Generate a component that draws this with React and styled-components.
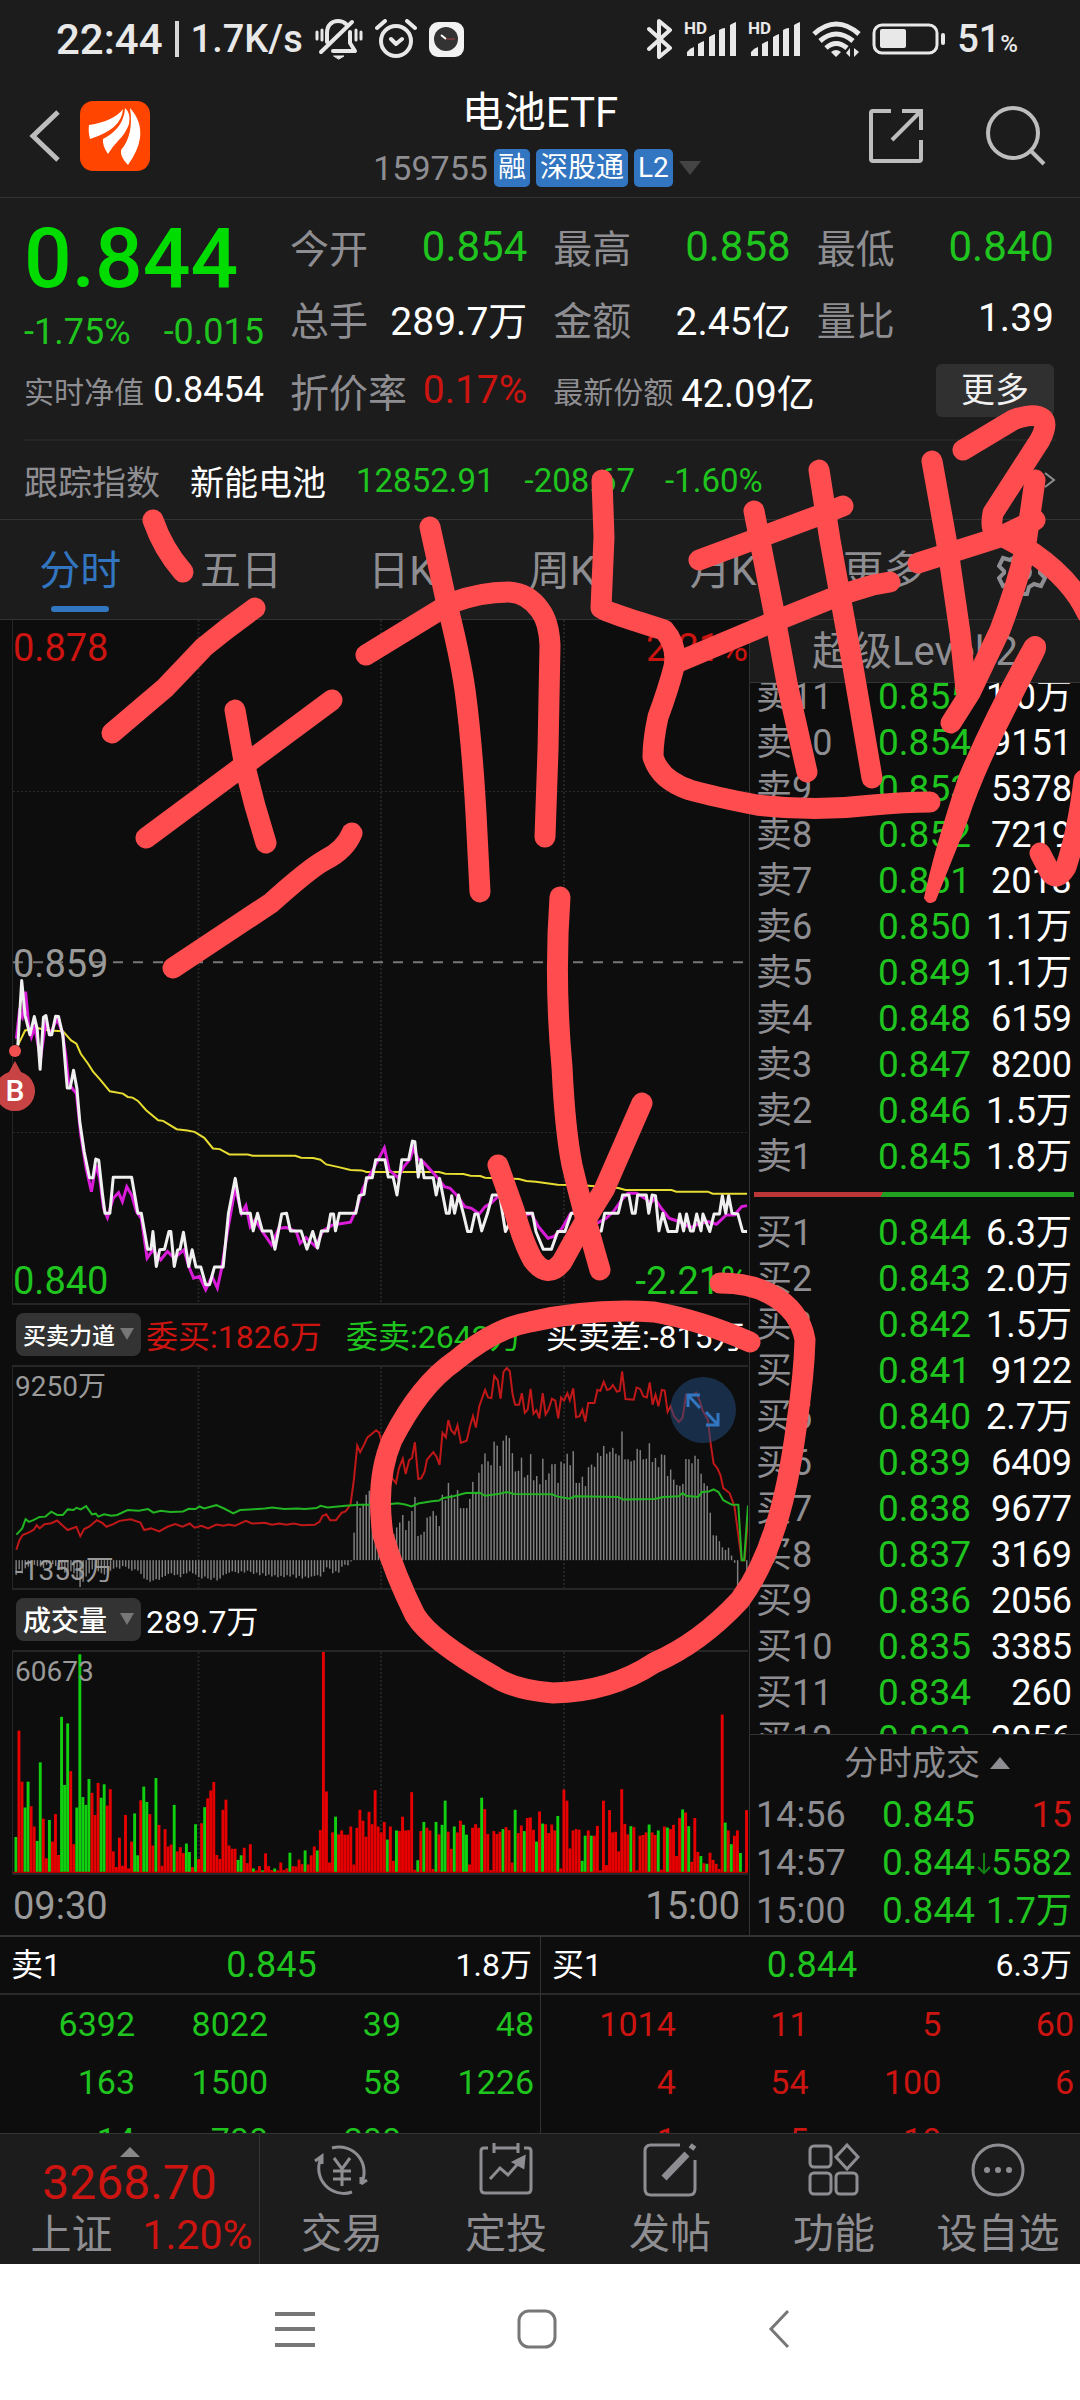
import React from "react";
import styled, { createGlobalStyle } from "styled-components";

const C = {
  bar: "#1c1c1c",
  base: "#0d0d0d",
  line: "#333333",
  grid: "#262626",
  up: "#cc1410",
  down: "#1fc41f",
  text: "#ffffff",
  mute: "#8e8e92",
  blue: "#3275c0",
  ink: "#ff4d4f",
};

const Global = createGlobalStyle`
  * { box-sizing: border-box; }
  html { background: #ffffff; }
  body {
    margin: 0;
    background: #ffffff;
    color: ${C.text};
    font-family: Roboto, "Noto Sans CJK SC", sans-serif;
  }
  button { font: inherit; color: inherit; background: none; border: 0; padding: 0; cursor: pointer; }
  a { color: inherit; text-decoration: none; }
  table { border-collapse: collapse; }
  h1, h2 { margin: 0; font-weight: 400; }
`;

const Page = styled.div`
  position: relative;
  overflow: hidden;
  background: ${C.base};
  white-space: nowrap;
`;

const Tone = styled.span`
  color: ${(p) => C[p.$c] || C.text};
  font-size: ${(p) => p.$size || 36}px;
`;

/* ---------- status bar ---------- */
const StatusBar = styled.div`
  display: flex;
  align-items: center;
  justify-content: space-between;
  height: 78px;
  padding: 0 62px 0 56px;
  background: ${C.bar};
  color: #e8e8e8;
  font-weight: 500;
`;
const StatusGroup = styled.div`
  display: flex;
  align-items: center;
  gap: ${(p) => p.$gap}px;
`;
const Clock = styled.span`font-size: 42px;`;
const Speed = styled.span`font-size: 38px;`;
const Divider = styled.i`
  width: 4px;
  height: 36px;
  background: #d8d8d8;
`;
const Percent = styled.small`font-size: 24px;`;

/* ---------- title bar ---------- */
const TitleBar = styled.header`
  display: grid;
  grid-template-columns: 1fr auto 1fr;
  align-items: center;
  height: 120px;
  padding: 0 34px 4px 28px;
  background: ${C.bar};
  border-bottom: 1px solid ${C.line};
`;
const TitleSide = styled.div`
  display: flex;
  align-items: center;
  justify-content: ${(p) => (p.$end ? "flex-end" : "flex-start")};
  gap: ${(p) => (p.$end ? 62 : 20)}px;
`;
const IconButton = styled.button`
  display: flex;
  align-items: center;
  justify-content: center;
`;
const TitleCenter = styled.div`
  display: flex;
  flex-direction: column;
  align-items: center;
  gap: 8px;
`;
const Title = styled.h1`
  padding-left: 6px;
  font-size: 42px;
  line-height: 56px;
`;
const CodeLine = styled.div`
  display: flex;
  align-items: center;
  gap: 6px;
  line-height: 38px;
  font-size: 34px;
  color: ${C.mute};
`;
const Tag = styled.span`
  padding: 0 4px;
  border-radius: 5px;
  background: ${C.blue};
  color: #ffffff;
  font-size: 28px;
  line-height: 38px;
`;
const Caret = styled.i`
  width: 0;
  height: 0;
  border: ${(p) => p.$w}px solid transparent;
  border-${(p) => (p.$up ? "bottom" : "top")}: ${(p) => p.$h}px solid ${(p) => p.$color};
  border-${(p) => (p.$up ? "top" : "bottom")}-width: 0;
`;

/* ---------- quote summary ---------- */
const Quote = styled.section`
  display: grid;
  grid-template-columns: 240px 1fr 1fr 1fr;
  grid-auto-rows: 72px;
  column-gap: 26px;
  padding: 12px 26px 13px 24px;
  background: ${C.bar};
`;
const LastBlock = styled.div`
  grid-row: span 2;
`;
const LastPrice = styled.div`
  color: #00dc00;
  font-size: 84px;
  font-weight: 500;
  line-height: 98px;
`;
const Changes = styled.div`
  display: flex;
  justify-content: space-between;
  color: ${C.down};
  font-size: 36px;
  line-height: 48px;
`;
const Stat = styled.div`
  display: flex;
  align-items: center;
  justify-content: ${(p) => (p.$tight ? "flex-start" : "space-between")};
  gap: 8px;
  grid-column: span ${(p) => p.$span || 1};
`;
const StatName = styled.span`
  color: ${C.mute};
  font-size: ${(p) => (p.$small ? 30 : 39)}px;
`;
const MoreButton = styled.button`
  width: 118px;
  margin-left: auto;
  border-radius: 6px;
  background: #303030;
  color: #f0f0f0;
  font-size: 34px;
  line-height: 53px;
`;
const IndexRow = styled.a`
  display: flex;
  align-items: center;
  gap: 30px;
  height: 80px;
  margin: 0 24px;
  border-top: 2px solid #242424;
`;
const IndexWrap = styled.div`
  background: ${C.bar};
  border-bottom: 1px solid ${C.line};
`;
const Push = styled.span`
  display: flex;
  margin-left: auto;
`;

/* ---------- period tabs ---------- */
const Tabs = styled.nav`
  display: flex;
  height: 100px;
  background: ${C.bar};
  border-bottom: 1px solid ${C.line};
`;
const Tab = styled.button`
  display: flex;
  flex: 1;
  flex-direction: column;
  align-items: center;
  padding-top: 22px;
  color: ${(p) => (p.$on ? C.blue : C.mute)};
  font-size: 41px;
  line-height: 58px;
  &::after {
    content: "";
    width: 58px;
    height: 6px;
    margin-top: 6px;
    border-radius: 3px;
    background: ${(p) => (p.$on ? C.blue : "transparent")};
  }
`;
const GearButton = styled(IconButton)`
  flex: 0 0 116px;
  padding-top: 4px;
`;

/* ---------- charts ---------- */
const Main = styled.main`
  display: flex;
  border-bottom: 2px solid ${C.line};
`;
const ChartColumn = styled.section`
  flex: 1;
  min-width: 0;
  padding: 0 1px 0 12px;
`;
const ChartBox = styled.div`
  position: relative;
  height: ${(p) => p.$h}px;
  border: solid ${C.grid};
  border-width: 0 0 2px 1px;
  border-top: ${(p) => (p.$top ? `2px solid ${C.grid}` : "0")};
`;
const Plot = styled.svg`
  display: block;
  width: 100%;
  height: 100%;
  path, line { vector-effect: non-scaling-stroke; fill: none; }
`;
const AxisLabel = styled.span`
  position: absolute;
  left: ${(p) => (p.$right ? "auto" : "0")};
  right: ${(p) => (p.$right ? "0" : "auto")};
  top: ${(p) => p.$y}px;
  padding: 0 ${(p) => (p.$small ? 2 : 0)}px;
  color: ${(p) => C[p.$c] || "#999999"};
  font-size: ${(p) => (p.$small ? 28 : 38)}px;
  line-height: 40px;
`;
const BuyMark = styled.svg`
  position: absolute;
  left: -18px;
  top: 424px;
  overflow: visible;
`;
const Expand = styled.button`
  position: absolute;
  right: 12px;
  top: 10px;
  width: 66px;
  height: 66px;
  border-radius: 50%;
  background: rgba(34, 74, 122, 0.55);
  display: flex;
  align-items: center;
  justify-content: center;
`;
const Legend = styled.div`
  display: flex;
  align-items: center;
  height: 60px;
  padding: 0 0 2px 4px;
  font-size: 32px;
`;
const Pill = styled.button`
  display: flex;
  align-items: center;
  justify-content: space-between;
  width: 125px;
  height: 43px;
  margin-right: 5px;
  padding: 0 7px;
  border-radius: 8px;
  background: #333333;
  font-size: ${(p) => (p.$long ? 23 : 28)}px;
  font-weight: 500;
`;
const LegendItem = styled.span`
  width: 200px;
  color: ${(p) => C[p.$c]};
`;
const TimeAxis = styled.div`
  display: flex;
  justify-content: space-between;
  padding: 2px 8px 0 1px;
  color: #999999;
  font-size: 38px;
  line-height: 58px;
`;

/* ---------- order book ---------- */
const Book = styled.aside`
  flex: 0 0 331px;
  display: flex;
  flex-direction: column;
  border-left: 1px solid ${C.line};
`;
const BookHead = styled.h2`
  padding-top: 2px;
  background: ${C.bar};
  border-bottom: 1px solid ${C.line};
  color: ${C.mute};
  font-size: 40px;
  line-height: 60px;
  text-align: center;
`;
const Levels = styled.div`
  height: 1052px;
  padding: 0 8px 0 6px;
  overflow: hidden;
  border-bottom: 1px solid ${C.line};
`;
const LevelTable = styled.table`
  width: 100%;
  table-layout: fixed;
  margin-top: ${(p) => (p.$scrolled ? "-9px" : "0")};
  font-size: 36px;
  line-height: ${(p) => p.$row || 46}px;
  td, th { padding: 0; height: ${(p) => p.$row || 46}px; font-weight: 400; text-align: right; }
  th { width: 90px; text-align: left; color: ${C.mute}; }
  td:nth-child(2) { width: ${(p) => (p.$row ? 129 : 125)}px; color: ${C.down}; font-size: 37px; }
`;
const Ratio = styled.div`
  height: 5px;
  margin: 12px -2px 13px;
  background: linear-gradient(120deg, #bb3636 40%, #22a022 40%);
`;
const TradeHead = styled.button`
  display: flex;
  align-items: center;
  justify-content: center;
  gap: 10px;
  padding-left: 24px;
  color: ${C.mute};
  font-size: 34px;
  line-height: 56px;
`;
const Trades = styled.div`padding: 0 8px 0 6px;`;

/* ---------- queues ---------- */
const Queues = styled.section`
  display: grid;
  grid-template-columns: 1fr 1fr;
`;
const Queue = styled.div`
  border-left: ${(p) => (p.$second ? `1px solid ${C.line}` : "0")};
`;
const QueueHead = styled.div`
  display: grid;
  grid-template-columns: 1fr auto 1fr;
  align-items: center;
  padding: 0 8px 0 11px;
  border-bottom: 2px solid #2a2a2a;
  font-size: 32px;
  line-height: 56px;
  > :last-child { text-align: right; }
`;
const QueueBody = styled.div`
  height: 138px;
  padding-left: 8px;
  overflow: hidden;
`;
const QueueTable = styled.table`
  width: 100%;
  table-layout: fixed;
  color: ${(p) => C[p.$c]};
  font-size: 34px;
  line-height: 58px;
  td { padding: 0 6px 0 0; height: 58px; text-align: right; }
`;

/* ---------- bottom bars ---------- */
const Dock = styled.nav`
  display: flex;
  background: ${C.bar};
  border-top: 1px solid ${C.line};
`;
const IndexCell = styled.a`
  display: flex;
  flex: 0 0 260px;
  flex-direction: column;
  align-items: center;
  padding-top: 13px;
  border-right: 1px solid ${C.line};
  line-height: 52px;
`;
const IndexLine = styled.span`
  display: flex;
  gap: 30px;
  padding-left: 24px;
`;
const DockItem = styled.button`
  display: flex;
  flex: 1;
  flex-direction: column;
  align-items: center;
  gap: 6px;
  padding-top: 8px;
  color: ${C.mute};
  font-size: 41px;
  line-height: 60px;
`;
const SystemBar = styled.nav`
  display: flex;
  justify-content: center;
  height: 136px;
  padding: 0 6px 6px 0;
  background: #ffffff;
`;
const SystemKey = styled(IconButton)`
  width: 242px;
`;
const Scribble = styled.svg`
  position: absolute;
  left: 0;
  top: 0;
  width: 100%;
  pointer-events: none;
  fill: none;
  stroke: ${C.ink};
  stroke-width: 21;
  stroke-linecap: round;
  stroke-linejoin: round;
`;

/* ---------- data ---------- */
const PRICE =
  "35,290 43,95 50,200 60,258 69,203 75,240 81,362 88,205 93,200 100,258 105,258 113,202 119,203 128,260 137,418 143,418 150,365 157,420 163,520 172,610 183,688 190,688 196,632 202,635 210,740 215,795 225,795 232,687 270,687 283,795 290,795 303,903 310,903 314,850 321,955 328,905 338,903 347,850 351,850 358,955 365,905 370,903 377,852 388,955 395,905 403,957 413,957 423,1010 431,1010 441,957 459,957 470,795 484,690 496,795 515,795 521,848 530,795 540,848 558,848 566,903 580,797 590,795 598,848 620,848 632,903 644,850 654,900 662,848 675,848 681,797 687,797 691,848 699,795 733,795 740,742 750,738 755,688 767,688 774,634 793,634 800,686 810,686 818,740 828,634 842,634 850,578 855,580 862,686 868,634 874,688 893,688 899,740 906,690 920,795 926,795 931,742 937,795 945,740 955,795 964,850 971,850 979,797 985,797 993,848 1005,795 1015,740 1030,740 1042,850 1060,795 1098,795 1105,850 1120,903 1137,903 1150,850 1165,850 1178,795 1200,795 1215,850 1240,848 1247,795 1275,795 1284,740 1297,740 1304,795 1310,795 1315,740 1333,740 1338,795 1345,740 1352,742 1359,848 1367,795 1378,850 1396,850 1402,797 1410,848 1416,797 1424,848 1430,848 1437,797 1446,848 1450,797 1464,850 1473,797 1484,797 1490,742 1497,795 1503,742 1510,795 1522,797 1532,850 1541,850";
const LEAD =
  "32,270 38,190 44,205 51,128 58,240 63,265 70,235 82,330 92,225 102,255 116,210 127,250 134,320 140,405 156,435 165,560 176,660 187,730 196,650 204,690 212,780 220,808 232,750 243,733 251,760 260,715 270,740 280,790 290,810 302,930 314,905 330,935 344,910 358,930 378,905 388,955 398,990 410,985 423,1025 436,985 447,1020 456,960 468,850 484,720 497,795 506,772 515,835 525,815 540,850 559,890 574,840 590,838 610,850 618,885 630,868 650,895 665,848 685,830 722,822 735,780 748,720 758,690 770,660 792,598 802,665 820,688 832,655 845,632 852,600 862,632 872,640 900,685 916,715 928,720 944,745 958,775 972,780 988,797 1000,775 1012,765 1030,740 1048,800 1070,812 1095,795 1110,835 1130,870 1142,865 1158,842 1176,797 1200,780 1225,830 1250,810 1265,790 1282,755 1295,735 1313,735 1332,752 1342,765 1350,750 1364,780 1380,810 1404,822 1424,838 1440,828 1460,820 1478,828 1498,800 1515,800 1530,775 1541,772";
const AVG =
  "35,290 50,245 75,238 100,245 128,247 145,275 156,285 165,315 180,345 190,368 205,393 225,428 252,435 262,445 272,447 283,457 300,485 325,515 335,517 363,542 385,546 400,550 420,568 438,600 452,602 472,618 510,618 520,622 608,622 620,628 645,629 660,634 672,648 700,657 722,665 745,666 755,671 905,671 918,676 955,677 970,682 990,683 1000,688 1070,692 1085,698 1105,700 1120,703 1150,709 1200,711 1275,719 1290,725 1385,725 1395,730 1460,730 1470,736 1541,736";
const BUY_FORCE =
  "32,753 38,725 45,708 58,700 68,692 74,678 80,688 90,675 104,672 116,664 128,680 138,693 156,683 164,712 172,690 183,682 198,663 210,672 218,683 232,675 245,665 268,660 288,670 296,693 310,688 327,697 344,683 360,675 375,683 390,673 400,686 414,680 428,688 445,676 460,680 470,676 483,680 506,665 518,673 545,671 560,677 575,673 590,677 605,673 622,678 648,677 658,668 664,650 672,645 680,663 692,663 704,640 712,636 722,615 729,540 736,435 742,455 750,432 757,410 764,402 775,388 781,395 788,430 800,520 816,550 822,505 830,475 836,522 843,480 849,473 855,425 862,537 868,535 875,515 880,478 893,455 900,470 906,494 912,396 919,410 924,357 930,388 937,400 943,373 950,427 962,420 969,375 975,345 981,380 988,315 1000,265 1006,288 1013,290 1019,222 1026,235 1032,292 1038,210 1045,198 1051,208 1057,280 1062,310 1070,310 1076,275 1082,335 1088,325 1094,262 1100,338 1106,327 1112,352 1119,275 1125,340 1131,325 1138,292 1145,298 1151,352 1157,288 1163,298 1170,275 1175,297 1182,260 1188,348 1195,345 1201,325 1207,362 1213,305 1226,305 1232,265 1238,268 1245,240 1252,265 1258,262 1264,250 1272,270 1278,268 1283,208 1290,293 1307,295 1313,258 1320,262 1327,285 1334,288 1340,242 1346,310 1352,280 1358,315 1365,265 1371,267 1377,332 1383,315 1390,345 1400,363 1408,350 1415,280 1428,282 1436,274 1443,298 1450,330 1460,355 1466,430 1472,490 1480,505 1486,525 1492,565 1505,580 1515,620 1524,720 1530,785 1536,785 1543,655";
const SELL_FORCE =
  "32,707 44,688 51,660 58,668 68,662 80,653 92,652 104,637 116,647 128,647 138,630 150,632 156,625 165,630 176,620 188,645 196,643 201,652 213,645 228,649 240,647 262,632 285,634 304,629 315,640 330,634 350,638 376,636 388,628 402,629 410,621 420,627 445,617 462,628 480,642 494,632 515,630 545,627 560,624 585,629 612,627 628,629 652,626 660,619 675,624 712,619 740,616 790,616 820,611 835,615 848,621 862,612 890,605 905,603 912,596 935,590 960,580 988,579 1000,588 1030,582 1045,577 1060,583 1138,584 1150,591 1175,597 1185,590 1275,592 1285,600 1350,598 1368,592 1400,590 1408,580 1415,588 1440,592 1448,577 1462,575 1472,569 1482,577 1492,602 1510,616 1523,616 1530,785 1535,785 1543,618";
const FORCE_BARS = [
  -45, -28, -40, -25, -20, -22, -14, -18, -20, -24, -14, -10, -12, -18, -24, -30, -38, -46, -34, -40, -60, -82, -66, -50, -40, -28, -22, -34, -40, -44, -38, -32, -26, -22, -26, -18, -20, -26, -32, -28, -32, -42, -56, -60, -66, -62, -58, -60, -52, -48, -42, -40, -46, -44, -52, -42, -40, -34, -40, -44, -52, -56, -50, -56, -60, -54, -62, -56, -46, -42, -38, -34, -36, -40, -34, -38, -32, -36, -42, -38, -46, -40, -48, -44, -50, -46, -52, -48, -52, -46, -50, -44, -54, -48, -56, -50, -54, -50, -48, -46, -50, -36, -22, -26, -40, -34, -38, -20, -14, -16, -4,
  84, 180, 160, 172, 200, 212, 220, 210, 190, 170, 150, 120, 100, 80, 100, 115, 138, 92, 120, 150, 193, 74, 78, 87, 130, 134, 150, 136, 104, 200, 183, 236, 200, 188, 214, 159, 159, 159, 187, 239, 207, 267, 293, 326, 302, 290, 362, 350, 288, 365, 381, 373, 327, 271, 273, 313, 253, 260, 324, 244, 257, 232, 310, 245, 265, 293, 294, 236, 301, 295, 325, 290, 333, 236, 236, 255, 226, 284, 292, 285, 328, 318, 349, 325, 331, 343, 325, 320, 393, 308, 308, 302, 305, 340, 336, 308, 310, 357, 300, 312, 284, 323, 321, 257, 277, 246, 230, 227, 233, 309, 308, 296, 319, 309, 264, 235, 227, 145, 76, 75, 58, 39, 31, 38, 14, -8, -82, 0, 0, -80,
];
const VOLUME =
  "g110 r435 r279 g200 g279 r204 r142 g98 g338 r166 r45 g162 r96 r180 r55 g477 g269 g457 r311 r88 g200 g668 g232 g208 g287 r245 r177 r275 g230 g271 r206 r256 r66 r18 r108 r22 r177 r14 r96 g182 g54 r222 g264 g217 r180 r84 g290 r147 r22 r134 r81 r87 g208 r66 r79 r61 g90 g64 r18 g149 r43 r152 g201 r228 r252 r278 r55 r43 r193 r224 r84 r74 r74 g40 g54 r77 r30 r88 g14 r8 r21 g8 r60 r21 r9 g14 r8 r32 r9 r14 g62 r21 r20 r41 r27 g69 r26 r54 r81 g69 r131 r675 r249 r32 r124 g172 r118 r130 r117 r117 r142 r26 r138 r193 r160 r111 r187 r149 r253 r142 r124 r156 g102 r142 r37 g130 r128 r172 r130 r131 r247 r10 g39 r128 g156 r138 r130 r12 g156 r118 g147 g221 r126 r74 g142 r124 r160 g147 g117 r26 r138 r149 r138 g230 r195 r119 r9 r128 r119 r126 g134 r140 r131 r32 g193 r122 r145 g128 r168 r170 r132 g96 r188 g151 r149 r122 r148 r130 g174 r14 r255 r221 r75 r130 r134 r132 g37 g114 r130 g114 r114 r144 r8 r221 r24 r192 r124 r126 r66 r256 r150 r118 g143 r140 r8 r114 r116 r124 g148 r124 r116 g130 r10 r142 g139 r134 r147 r52 r168 g194 r185 g143 r34 r168 r64 g52 r30 g28 r62 r40 r28 r12 r484 g154 r130 g88 r114 r130 g61 r0 r192".split(
    " "
  );
const STEP = 1509 / 240;

const ASKS = [
  ["卖11", "0.855", "1.0万"], ["卖10", "0.854", "9151"], ["卖9", "0.853", "5378"],
  ["卖8", "0.852", "7219"], ["卖7", "0.851", "2013"], ["卖6", "0.850", "1.1万"],
  ["卖5", "0.849", "1.1万"], ["卖4", "0.848", "6159"], ["卖3", "0.847", "8200"],
  ["卖2", "0.846", "1.5万"], ["卖1", "0.845", "1.8万"],
];
const BIDS = [
  ["买1", "0.844", "6.3万"], ["买2", "0.843", "2.0万"], ["买3", "0.842", "1.5万"],
  ["买4", "0.841", "9122"], ["买5", "0.840", "2.7万"], ["买6", "0.839", "6409"],
  ["买7", "0.838", "9677"], ["买8", "0.837", "3169"], ["买9", "0.836", "2056"],
  ["买10", "0.835", "3385"], ["买11", "0.834", "260"], ["买12", "0.833", "2056"],
];
const ASK_QUEUE = [["6392", "8022", "39", "48"], ["163", "1500", "58", "1226"], ["14", "700", "200", ""]];
const BID_QUEUE = [["1014", "11", "5", "60"], ["4", "54", "100", "6"], ["1", "5", "10", ""]];

/* ---------- icons ---------- */
const s = (w, extra) => ({ fill: "none", stroke: "currentColor", strokeWidth: w, ...extra });
const round = { strokeLinecap: "round", strokeLinejoin: "round" };

const MuteIcon = () => (
  <svg width="48" height="42" viewBox="0 0 48 42" {...s(4, round)}>
    <path d="M12 24V15C12 7 17 3 23 3c3 0 6 1 8 3M35 14v11l5 8H18M6 34 37 4" />
    <path d="M2 14v7M7 12v10M41 12v10M46 14v7" strokeWidth="3" />
    <path d="M19 38h10l-5 3z" fill="currentColor" strokeWidth="1" />
  </svg>
);
const AlarmIcon = () => (
  <svg width="42" height="40" viewBox="0 0 42 40" {...s(4, round)}>
    <circle cx="21" cy="22" r="15" />
    <path d="M2 9l8-7M40 9l-8-7M16 20l5 5 6-5" />
  </svg>
);
const DialIcon = () => (
  <svg width="35" height="35" viewBox="0 0 35 35">
    <rect width="35" height="35" rx="9" fill="#f2f2f2" />
    <circle cx="17" cy="17" r="12" fill="#333333" />
    <path d="M12 13l5 4" stroke="#fff" strokeWidth="2" />
    <path d="M17 17h9" stroke="#a04040" strokeWidth="1" />
  </svg>
);
const BluetoothIcon = () => (
  <svg width="26" height="42" viewBox="0 0 26 42" {...s(4, round)}>
    <path d="M2 11l21 19-11 9V3l11 9L2 31" />
  </svg>
);
const HdText = styled.text`
  font-size: 17px;
  font-weight: 700;
  fill: currentColor;
`;
const SignalIcon = () => (
  <svg width="53" height="36" viewBox="0 0 53 36" fill="currentColor">
    <HdText x="0" y="13">HD</HdText>
    <path d="M3 35v-4q3-4 7-5v9zM14 35V23q3-2 6-3v15zM25 35V16q3-2 6-3v22zM35 35V9q3-2 6-2v28zM46 35V4q3-2 6-3v34z" />
  </svg>
);
const WifiIcon = () => (
  <svg width="49" height="37" viewBox="0 0 49 37">
    <g {...s(5)}>
      <path d="M2 13Q24-7 47 13M8 20Q24 6 41 20M14 27q10-9 21 0" />
    </g>
    <path d="M19 31q5-4 10 0l-5 5zM38 27v9l-4-4zM42 36v-9l5 4" fill="currentColor" />
  </svg>
);
const BatteryIcon = () => (
  <svg width="74" height="32" viewBox="0 0 74 32">
    <rect x="2" y="2" width="63" height="28" rx="8" {...s(3)} />
    <rect x="8" y="6" width="26" height="19" rx="2" fill="currentColor" />
    <rect x="69" y="10" width="4" height="12" rx="2" fill="currentColor" />
  </svg>
);
const Logo = () => (
  <svg width="70" height="70" viewBox="0 0 70 70">
    <rect width="70" height="70" rx="13" fill="#ff4500" />
    <g fill="#fff">
      <path d="M9 24Q34 20 43 8Q42 28 10 38Q8 30 9 24z" />
      <path d="M23 38Q44 27 45 7Q51 12 49 23Q46 32 38 40Q33 45 28 53Q22 44 23 38z" />
      <path d="M50 7Q62 20 60 37Q58 50 48 64Q40 56 41 49Q54 34 50 7z" />
    </g>
  </svg>
);
const ShareIcon = () => (
  <svg width="56" height="56" viewBox="0 0 56 56" {...s(4)} color="#bdbdbd">
    <path d="M23 3H5q-2 0-2 2v46q0 2 2 2h46q2 0 2-2V32M34 3h19v19M24 32 52 4" />
  </svg>
);
const SearchIcon = () => (
  <svg width="60" height="61" viewBox="0 0 60 61" {...s(4)} color="#bdbdbd">
    <circle cx="27" cy="28" r="25" />
    <path d="M45 46l13 13" />
  </svg>
);
const GearIcon = () => (
  <svg width="50" height="50" viewBox="0 0 50 50" {...s(4)} color={C.mute}>
    <path d="M20 3h10l2 7 5 3 7-2 4 8-5 5v2l5 5-4 8-7-2-5 3-2 7H20l-2-7-5-3-7 2-4-8 5-5v-2l-5-5 4-8 7 2 5-3z" />
    <circle cx="25" cy="25" r="8" />
  </svg>
);
const DOCK = [
  ["交易", <g key="a"><path d="M18 6a25 25 0 0 1 29 36M38 50A25 25 0 0 1 7 16M1 19l7-5v8M47 42l6-4M47 42v-7" /><path d="M20 16l8 11 8-11M28 27v17M19 29h18M19 37h18" /></g>],
  ["定投", <g key="b"><path d="M10 6H6q-3 0-3 3v38q0 4 4 4h42q4 0 4-4V9q0-3-3-3h-4M16 6h24M16 1v10M40 1v10" /><path d="M12 37l10-11 8 7 14-16" /><path d="M36 20l10-5-1 10z" fill="currentColor" /></g>],
  ["发帖", <g key="c"><path d="M38 3H9Q3 3 3 9v38q0 6 6 6h38q6 0 6-6V18" /><path d="M45 12 22 36" strokeWidth="7" /><path d="M49 7l3-4" strokeWidth="6" /></g>],
  ["功能", <g key="d"><rect x="4" y="4" width="21" height="21" rx="4" /><rect x="4" y="31" width="21" height="21" rx="4" /><rect x="30" y="31" width="21" height="21" rx="4" /><path d="M41 3 52 15 41 27 30 15z" /></g>],
  ["设自选", <g key="e"><circle cx="28" cy="28" r="25" /><g fill="currentColor" stroke="none"><circle cx="17" cy="28" r="3" /><circle cx="28" cy="28" r="3" /><circle cx="39" cy="28" r="3" /></g></g>],
];

const toPath = (pts) => "M" + pts.split(" ").join("L");

function Grid({ top, bottom }) {
  return [408, 785, 1163].map((x) => (
    <line key={x} x1={x} x2={x} y1={top} y2={bottom} stroke="#242424" strokeWidth="2" strokeDasharray="2 2" />
  ));
}

function PriceChart() {
  return (
    <ChartBox $h={685}>
      <Plot viewBox="25 -990 1518 2055" preserveAspectRatio="none">
        <Grid top={-990} bottom={1065} />
        {[-474, 552].map((y) => (
          <line key={y} x1="25" x2="1543" y1={y} y2={y} stroke="#2a2a2a" strokeWidth="1" strokeDasharray="2 2" />
        ))}
        <line x1="25" x2="1543" y1="40" y2="40" stroke="#777777" strokeWidth="2" strokeDasharray="10 10" />
        <path d={toPath(AVG)} stroke="#e6dc32" strokeWidth="2" />
        <path d={toPath(LEAD)} stroke="#d81cd8" strokeWidth="3" />
        <path d={toPath(PRICE)} stroke="#f0f0f0" strokeWidth="3" strokeLinejoin="round" />
      </Plot>
      <AxisLabel $y={8} $c="up">0.878</AxisLabel>
      <AxisLabel $y={8} $c="up" $right>2.21%</AxisLabel>
      <AxisLabel $y={324}>0.859</AxisLabel>
      <AxisLabel $y={641} $c="down">0.840</AxisLabel>
      <AxisLabel $y={641} $c="down" $right>-2.21%</AxisLabel>
      <BuyMark width="40" height="68" viewBox="0 0 40 68">
        <circle cx="20" cy="7" r="6" fill="#f05050" />
        <path d="M20 17l6 11a20 20 0 1 1-12 0z" fill="#c84444" />
        <text x="20" y="57" textAnchor="middle" fontSize="30" fontWeight="500" fill="#fff">B</text>
      </BuyMark>
    </ChartBox>
  );
}

function ForceChart() {
  return (
    <ChartBox $h={225} $top>
      <Plot viewBox="25 195 1518 675" preserveAspectRatio="none">
        <Grid top={195} bottom={870} />
        {FORCE_BARS.map((v, i) => (
          <rect key={i} x={30 + i * STEP} y={v > 0 ? 785 - v : 785} width="3" height={Math.abs(v)} fill="#808080" />
        ))}
        <path d={toPath(BUY_FORCE)} stroke="#c01818" strokeWidth="2" />
        <path d={toPath(SELL_FORCE)} stroke="#22b422" strokeWidth="2" />
      </Plot>
      <AxisLabel $y={0} $small>9250万</AxisLabel>
      <AxisLabel $y={184} $small>-1353万</AxisLabel>
      <Expand aria-label="放大">
        <svg width="34" height="34" viewBox="0 0 34 34" {...s(3)} color={C.blue}>
          <path d="M2 14V2h12M2 2l12 13M32 20v12H20M32 32 20 19" />
        </svg>
      </Expand>
    </ChartBox>
  );
}

function VolumeChart() {
  return (
    <ChartBox $h={225} $top>
      <Plot viewBox="25 150 1518 675" preserveAspectRatio="none">
        <Grid top={150} bottom={825} />
        {VOLUME.map((v, i) => (
          <rect
            key={i}
            x={28 + i * STEP}
            y={825 - Number(v.slice(1))}
            width="6"
            height={Number(v.slice(1))}
            fill={v[0] === "g" ? "#10d010" : "#e60000"}
          />
        ))}
        <line x1="25" x2="1543" y1="824" y2="824" stroke="#b00000" strokeWidth="2" />
      </Plot>
      <AxisLabel $y={0} $small>60673</AxisLabel>
    </ChartBox>
  );
}

function LevelRows({ rows, scrolled }) {
  return (
    <LevelTable $scrolled={scrolled}>
      <tbody>
        {rows.map(([name, price, size]) => (
          <tr key={name}>
            <th scope="row">{name}</th>
            <td>{price}</td>
            <td>{size}</td>
          </tr>
        ))}
      </tbody>
    </LevelTable>
  );
}

function QueuePanel({ name, price, size, rows, color, second }) {
  return (
    <Queue $second={second}>
      <QueueHead>
        <span>{name}</span>
        <Tone $c="down">{price}</Tone>
        <span>{size}</span>
      </QueueHead>
      <QueueBody>
        <QueueTable $c={color}>
          <tbody>
            {rows.map((r, i) => (
              <tr key={i}>{r.map((v, j) => <td key={j}>{v}</td>)}</tr>
            ))}
          </tbody>
        </QueueTable>
      </QueueBody>
    </Queue>
  );
}

const STROKES = [
  "M153 520Q163 549 183 572",
  "M255 608Q228 627 204 647Q188 664 165 688L112 733",
  "M332 700Q240 768 146 838",
  "M235 710L245 767Q254 805 266 843",
  "M352 833Q345 850 325 860Q310 868 271 903L173 968",
  "M366 655L451 603Q480 592 509 592Q528 593 540 610Q549 622 550 645L548 750L545 837",
  "M430 527L446 600Q460 655 465 690Q473 750 477 833L480 892",
  "M602 480L604 537L601 608Q603 611 664 630Q678 646 674 667Q668 690 658 717Q653 740 653 757Q660 780 690 790Q715 797 757 805Q815 812 873 805Q905 802 930 802",
  "M699 560L753 540L820 515L843 506",
  "M678 662L773 622L840 595L873 585L890 582",
  "M754 511L773 607L787 683L807 772",
  "M819 470L830 540L853 667L872 778",
  "M932 461L948 550L960 633L966 690",
  "M1035 480L1025 550Q1017 585 1000 630L970 693L951 723",
  "M918 563L1000 537L1035 520",
  "M963 450L1013 420Q1034 412 1043 419Q1048 425 1040 440L993 513Q990 528 995 532L1033 553Q1072 580 1087 613",
  "M1084 780Q1078 830 1066 867Q1057 882 1050 872L1040 853",
  "M560 897Q554 980 562 1067Q565 1130 572 1165Q580 1200 600 1270",
  "M498 1165L514 1210Q524 1245 533 1260Q548 1280 562 1262Q585 1220 604 1190L642 1103",
  "M720 1283Q750 1283 770 1294Q800 1310 805 1340Q804 1375 797 1422Q788 1490 775 1528Q762 1570 740 1600Q700 1643 654 1663Q610 1692 553 1693Q515 1690 495 1677Q430 1640 415 1615Q395 1575 383 1535Q375 1480 392 1440Q420 1385 455 1361Q495 1328 530 1322Q590 1308 654 1312Q700 1320 750 1342",
];

export default function App() {
  return (
    <Page>
      <Global />
      <StatusBar>
        <StatusGroup $gap={12}>
          <Clock>22:44</Clock>
          <Divider />
          <Speed>1.7K/s</Speed>
          <MuteIcon />
          <AlarmIcon />
          <DialIcon />
        </StatusGroup>
        <StatusGroup $gap={11}>
          <BluetoothIcon />
          <SignalIcon />
          <SignalIcon />
          <WifiIcon />
          <BatteryIcon />
          <Speed>51<Percent>%</Percent></Speed>
        </StatusGroup>
      </StatusBar>

      <TitleBar>
        <TitleSide>
          <IconButton aria-label="返回">
            <svg width="32" height="54" viewBox="0 0 32 54" {...s(5)} color="#bdbdbd">
              <path d="M30 3 5 27l25 24" />
            </svg>
          </IconButton>
          <Logo />
        </TitleSide>
        <TitleCenter>
          <Title>电池ETF</Title>
          <CodeLine>
            159755 <Tag>融</Tag><Tag>深股通</Tag><Tag>L2</Tag>
            <Caret $w={11} $h={14} $color="#444444" />
          </CodeLine>
        </TitleCenter>
        <TitleSide $end>
          <IconButton aria-label="分享"><ShareIcon /></IconButton>
          <IconButton aria-label="搜索"><SearchIcon /></IconButton>
        </TitleSide>
      </TitleBar>

      <Quote>
        <LastBlock>
          <LastPrice>0.844</LastPrice>
          <Changes><span>-1.75%</span><span>-0.015</span></Changes>
        </LastBlock>
        <Stat><StatName>今开</StatName><Tone $c="down" $size={42}>0.854</Tone></Stat>
        <Stat><StatName>最高</StatName><Tone $c="down" $size={42}>0.858</Tone></Stat>
        <Stat><StatName>最低</StatName><Tone $c="down" $size={42}>0.840</Tone></Stat>
        <Stat><StatName>总手</StatName><Tone $size={39}>289.7万</Tone></Stat>
        <Stat><StatName>金额</StatName><Tone $size={39}>2.45亿</Tone></Stat>
        <Stat><StatName>量比</StatName><Tone $size={39}>1.39</Tone></Stat>
        <Stat><StatName $small>实时净值</StatName><Tone $size={36}>0.8454</Tone></Stat>
        <Stat><StatName>折价率</StatName><Tone $c="up" $size={39}>0.17%</Tone></Stat>
        <Stat $tight $span={2}>
          <StatName $small>最新份额</StatName>
          <Tone $size={38}>42.09亿</Tone>
          <MoreButton>更多</MoreButton>
        </Stat>
      </Quote>
      <IndexWrap>
        <IndexRow href="#index">
          <Tone $c="mute" $size={34}>跟踪指数</Tone>
          <Tone $size={34}>新能电池</Tone>
          <Tone $c="down" $size={33}>12852.91</Tone>
          <Tone $c="down" $size={33}>-208.67</Tone>
          <Tone $c="down" $size={33}>-1.60%</Tone>
          <Push>
            <svg width="12" height="16" viewBox="0 0 12 16" {...s(2)} color={C.mute}>
              <path d="M1 1l9 7-9 7" />
            </svg>
          </Push>
        </IndexRow>
      </IndexWrap>

      <Tabs>
        {["分时", "五日", "日K", "周K", "月K", "更多"].map((t, i) => (
          <Tab key={t} $on={i === 0}>{t}</Tab>
        ))}
        <GearButton aria-label="设置"><GearIcon /></GearButton>
      </Tabs>

      <Main>
        <ChartColumn>
          <PriceChart />
          <Legend>
            <Pill $long>买卖力道 <Caret $w={7} $h={12} $color="#777777" /></Pill>
            <LegendItem $c="up">委买:1826万</LegendItem>
            <LegendItem $c="down">委卖:2642万</LegendItem>
            <LegendItem $c="text">买卖差:-815万</LegendItem>
          </Legend>
          <ForceChart />
          <Legend>
            <Pill>成交量 <Caret $w={7} $h={12} $color="#777777" /></Pill>
            <LegendItem $c="text">289.7万</LegendItem>
          </Legend>
          <VolumeChart />
          <TimeAxis><span>09:30</span><span>15:00</span></TimeAxis>
        </ChartColumn>
        <Book>
          <BookHead>超级Level-2</BookHead>
          <Levels>
            <LevelRows rows={ASKS} scrolled />
            <Ratio />
            <LevelRows rows={BIDS} />
          </Levels>
          <TradeHead>分时成交 <Caret $up $w={10} $h={12} $color={C.mute} /></TradeHead>
          <Trades>
            <LevelTable $row={48}>
              <tbody>
                <tr><th scope="row">14:56</th><td>0.845</td><td><Tone $c="up">15</Tone></td></tr>
                <tr>
                  <th scope="row">14:57</th>
                  <td>0.844</td>
                  <td>
                    <svg width="14" height="22" viewBox="0 0 14 22" {...s(2)} color="#128012">
                      <path d="M7 0v20M1 14l6 6 6-6" />
                    </svg>
                    <Tone $c="down">5582</Tone>
                  </td>
                </tr>
                <tr><th scope="row">15:00</th><td>0.844</td><td><Tone $c="down">1.7万</Tone></td></tr>
              </tbody>
            </LevelTable>
          </Trades>
        </Book>
      </Main>

      <Queues>
        <QueuePanel name="卖1" price="0.845" size="1.8万" rows={ASK_QUEUE} color="down" />
        <QueuePanel name="买1" price="0.844" size="6.3万" rows={BID_QUEUE} color="up" second />
      </Queues>

      <Dock>
        <IndexCell href="#sse">
          <Caret $up $w={10} $h={10} $color="#888888" />
          <Tone $c="up" $size={48}>3268.70</Tone>
          <IndexLine><Tone $c="mute" $size={41}>上证</Tone><Tone $c="up" $size={41}>1.20%</Tone></IndexLine>
        </IndexCell>
        {DOCK.map(([label, icon]) => (
          <DockItem key={label}>
            <svg width="56" height="56" viewBox="0 0 56 56" {...s(3)}>{icon}</svg>
            {label}
          </DockItem>
        ))}
      </Dock>

      <SystemBar>
        <SystemKey aria-label="最近任务">
          <svg width="40" height="40" viewBox="0 0 40 40" {...s(4)} color="#777777"><path d="M0 5h40M0 20h40M0 36h40" /></svg>
        </SystemKey>
        <SystemKey aria-label="主屏幕">
          <svg width="40" height="40" viewBox="0 0 40 40" {...s(3)} color="#777777"><rect x="2" y="2" width="36" height="36" rx="10" /></svg>
        </SystemKey>
        <SystemKey aria-label="返回上一页">
          <svg width="22" height="40" viewBox="0 0 22 40" {...s(3)} color="#777777"><path d="M20 2 3 20l17 18" /></svg>
        </SystemKey>
      </SystemBar>

      <Scribble viewBox="0 0 1080 2400" aria-hidden="true">
        {STROKES.map((d) => <path key={d} d={d} />)}
        <path
          d="M1026 642Q1035 632 1044 642Q1047 649 1042 657L1005 730Q980 780 967 820L935 900Q929 905 925 898Q935 850 960 775Q985 715 1026 642z"
          fill={C.ink}
          strokeWidth="2"
        />
      </Scribble>
    </Page>
  );
}
